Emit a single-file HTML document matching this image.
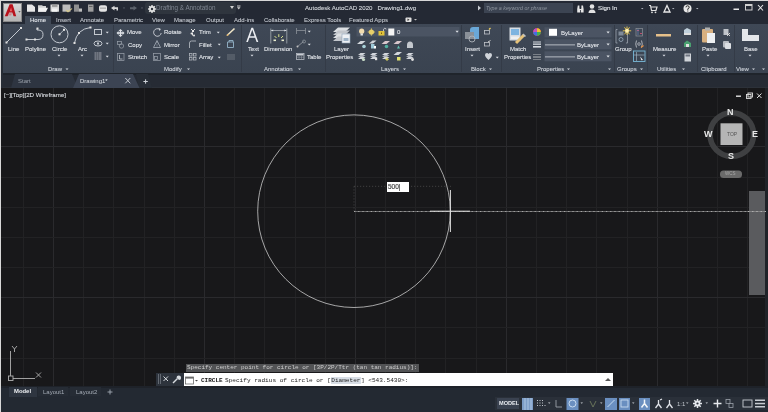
<!DOCTYPE html>
<html><head><meta charset="utf-8">
<style>
*{margin:0;padding:0;box-sizing:border-box}
html,body{width:768px;height:412px;overflow:hidden;background:#1b1b1d}
body{position:relative;font-family:"Liberation Sans",sans-serif;color:#d6dae0}
.a{position:absolute}
.t{position:absolute;white-space:nowrap;line-height:1;will-change:transform}
#title{left:0;top:0;width:768px;height:24px;background:#242934}
#ribbon{left:0;top:24px;width:768px;height:48.7px;background:linear-gradient(#3f4856,#3a4350)}
#ftabs{left:0;top:74px;width:768px;height:14px;background:#262b34}
#vp{left:0;top:88px;width:768px;height:298px;background:#18181a;overflow:hidden}
#status{left:0;top:386px;width:768px;height:26px;background:#232932}
#bt{left:0;top:0;width:768px;height:1px;background:#d8d8d8}
#bl{left:0;top:0;width:1px;height:412px;background:#d8d8d8}
.rt{font-size:6px;color:#e2e5ea;-webkit-text-stroke:0.1px #e2e5ea}
.pl{font-size:6px;color:#cdd2d9;-webkit-text-stroke:0.1px #cdd2d9}
</style></head><body>
<div id="title" class="a"></div>
<div id="ribbon" class="a"></div>
<div id="ftabs" class="a"></div>
<div id="vp" class="a"></div>
<div id="status" class="a"></div>
<!-- TITLE BAR -->
<div class="a" style="left:3px;top:3px;width:19px;height:19px;background:linear-gradient(#d8d8d8,#b4b4b4);border:0.5px solid #8a8a8a"></div>
<svg class="a" style="left:3px;top:3px" width="19" height="19" viewBox="0 0 19 19">
<path d="M1.8 13.2 L6.6 1.2 L9.6 1.2 L13.2 13.2 L10.6 13.2 L9.3 9.6 L6.2 9.6 L4.6 13.2Z" fill="#b8121c"/>
<path d="M6.8 8.2 L8.1 4.2 L9 8.2Z" fill="#f0686a"/>
<path d="M4.8 12.5 L6.4 10.3 L9.2 10.3 L8 12.5Z" fill="#d4606a" opacity="0.6"/>
<path d="M15.3 8.2 h2.4 l-1.2 1.3z" fill="#444"/>
</svg>
<svg class="a" style="left:24px;top:2px" width="220" height="13" viewBox="0 0 220 13"><g transform="translate(0 0.9) scale(1 0.8)">
<!-- new -->
<path d="M3 2 H8 L11 5 V11 H3Z" fill="#e6e6e6"/>
<!-- open -->
<path d="M14 3 H18 L19 4 H22 V11 H14Z" fill="#d2d2d2"/><path d="M15 6 H24 L22 11 H14Z" fill="#f0f0f0"/>
<!-- save -->
<rect x="26.5" y="2" width="8.5" height="9" fill="#d9d9d9"/><rect x="28" y="2" width="5.5" height="3" fill="#9a9a9a"/><rect x="28" y="7" width="5.5" height="4" fill="#f2f2f2"/>
<!-- save as -->
<rect x="38.5" y="2" width="8" height="9" fill="#bdbdbd"/><path d="M42 9 l2 2 l4 -4" stroke="#d6c88a" stroke-width="1.2" fill="none"/>
<!-- web -->
<rect x="50" y="2" width="5" height="9" fill="#8f8f8f"/><rect x="55" y="7" width="3" height="4" fill="#bdbdbd"/>
<!-- plot -->
<rect x="64" y="2" width="5.5" height="9" fill="#9e9e9e"/><rect x="65" y="4" width="3.5" height="1" fill="#555"/>
<!-- print -->
<rect x="75" y="3" width="8" height="8" rx="2" fill="#e4e4e4"/><rect x="76" y="6" width="6" height="1" fill="#888"/>
<!-- undo -->
<path d="M87 6.5 L90.5 3.5 V5.5 H94 V9.5 H92.5 V7.5 H90.5 V9.5Z" fill="#d8d8d8"/>
<path d="M99 6 h2 l-1 1z" fill="#9aa0a8"/>
<!-- redo -->
<path d="M113 6.5 L109.5 3.5 V5.5 H106 V8 H109.5 V9.5Z" fill="#5d636c"/>
<path d="M117 6 h2 l-1 1z" fill="#9aa0a8"/></g>
</svg>
<div class="a" style="left:145px;top:2px;width:91px;height:12px;background:#2f353e;border-radius:3px"></div>
<svg class="a" style="left:146.5px;top:3.5px" width="10" height="10" viewBox="0 0 10 10">
<g stroke="#e4e4e4" stroke-width="1.4"><line x1="5" y1="1" x2="5" y2="9"/><line x1="1" y1="5" x2="9" y2="5"/><line x1="2.2" y1="2.2" x2="7.8" y2="7.8"/><line x1="7.8" y1="2.2" x2="2.2" y2="7.8"/></g>
<circle cx="5" cy="5" r="2.9" fill="#e4e4e4"/><circle cx="5" cy="5" r="1.2" fill="#2f353e"/>
</svg>
<div class="t" style="left:156px;top:5px;font-size:6.3px;color:#7f8691">Drafting &amp; Annotation</div>
<svg class="a" style="left:229px;top:5px" width="14" height="6" viewBox="0 0 14 6"><path d="M1 1h4l-2 3z" fill="#d0d0d0"/><rect x="8" y="0.5" width="3.5" height="1" fill="#d0d0d0"/><path d="M8 2.2h3.5l-1.75 2.3z" fill="#d0d0d0"/></svg>
<div class="t" style="left:305px;top:5.3px;font-size:6.1px;color:#d4d8dd;-webkit-text-stroke:0.1px #d4d8dd">Autodesk AutoCAD 2020&nbsp;&nbsp; Drawing1.dwg</div>
<svg class="a" style="left:477px;top:5px" width="5" height="6"><path d="M1 0.5 l3 2.5 l-3 2.5z" fill="#c8ccd2"/></svg>
<div class="a" style="left:484px;top:3px;width:89px;height:10px;background:#3c4452"></div>
<div class="t" style="left:486px;top:5.5px;font-size:5.3px;color:#8e959f;font-style:italic">Type a keyword or phrase</div>
<svg class="a" style="left:576px;top:3px" width="50" height="11" viewBox="0 0 50 11">
<path d="M1.8 2.5 h1.6 v3 l0.6 0.5 h0.8 l0.6 -0.5 v-3 h1.6 l0.6 3.5 v3.5 h-2.8 v-2.5 h-0.8 v2.5 h-2.8 v-3.5z" fill="#e6e6e6"/>
<circle cx="16" cy="3.5" r="2.3" fill="#e2e2e2"/><path d="M12.5 10 Q12.5 6.5 16 6.5 Q19.5 6.5 19.5 10Z" fill="#e2e2e2"/>
</svg>
<div class="t" style="left:598px;top:5px;font-size:6.2px;color:#dde0e4;-webkit-text-stroke:0.15px #dde0e4">Sign In</div>
<svg class="a" style="left:640px;top:3px" width="62" height="11" viewBox="0 0 62 11">
<path d="M1 5h2.5l-1.25 1.3z" fill="#b9bec6"/>
<path d="M9 2.5 h1.5 l1 5 h4.5 l1-3.5 h-6" stroke="#e0e0e0" stroke-width="1.2" fill="none"/><circle cx="12" cy="9.3" r="0.9" fill="#e0e0e0"/><circle cx="15.5" cy="9.3" r="0.9" fill="#e0e0e0"/>
<path d="M24 9 L27 2.5 L30 9Z" stroke="#e6e6e6" stroke-width="1.3" fill="none"/>
<path d="M32 5h2.5l-1.25 1.3z" fill="#b9bec6"/>
<circle cx="47.5" cy="5.5" r="4" fill="#e8e8e8"/><path d="M46 4.3 Q46 2.8 47.6 2.8 Q49.2 2.8 49.2 4.3 Q49.2 5.3 47.8 5.8 V6.8" stroke="#222" stroke-width="1" fill="none"/><rect x="47.3" y="7.5" width="1" height="1" fill="#222"/>
<path d="M56 5h2.5l-1.25 1.3z" fill="#b9bec6"/>
</svg>
<svg class="a" style="left:730px;top:3px" width="36" height="10" viewBox="0 0 36 10">
<rect x="3.5" y="5.5" width="5.5" height="1.5" fill="#e8e8e8"/>
<rect x="15.5" y="1.5" width="6.5" height="5.5" fill="none" stroke="#d0d0d0" stroke-width="1"/><rect x="15.5" y="1.5" width="6.5" height="1.5" fill="#d0d0d0"/>
<path d="M28 2 L33 7.5 M33 2 L28 7.5" stroke="#e8e8e8" stroke-width="1.1"/>
</svg>
<!-- RIBBON TABS -->
<div class="a" style="left:25px;top:16px;width:26px;height:8px;background:#3f4856"></div>
<div class="t rt" style="left:30px;top:16.5px">Home</div>
<div class="t rt" style="left:56px;top:16.5px;color:#bfc4cb;-webkit-text-stroke:0.1px #bfc4cb">Insert</div>
<div class="t rt" style="left:80px;top:16.5px;color:#bfc4cb;-webkit-text-stroke:0.1px #bfc4cb">Annotate</div>
<div class="t rt" style="left:114px;top:16.5px;color:#bfc4cb;-webkit-text-stroke:0.1px #bfc4cb">Parametric</div>
<div class="t rt" style="left:152px;top:16.5px;color:#bfc4cb;-webkit-text-stroke:0.1px #bfc4cb">View</div>
<div class="t rt" style="left:174px;top:16.5px;color:#bfc4cb;-webkit-text-stroke:0.1px #bfc4cb">Manage</div>
<div class="t rt" style="left:206px;top:16.5px;color:#bfc4cb;-webkit-text-stroke:0.1px #bfc4cb">Output</div>
<div class="t rt" style="left:234px;top:16.5px;color:#bfc4cb;-webkit-text-stroke:0.1px #bfc4cb">Add-ins</div>
<div class="t rt" style="left:264px;top:16.5px;color:#bfc4cb;-webkit-text-stroke:0.1px #bfc4cb">Collaborate</div>
<div class="t rt" style="left:304px;top:16.5px;color:#bfc4cb;-webkit-text-stroke:0.1px #bfc4cb">Express Tools</div>
<div class="t rt" style="left:349px;top:16.5px;color:#bfc4cb;-webkit-text-stroke:0.1px #bfc4cb">Featured Apps</div>
<svg class="a" style="left:404px;top:17px" width="14" height="6"><rect x="1.5" y="0.5" width="6" height="4.5" rx="1" fill="#e0e0e0"/><path d="M3.5 1.5 l2 1.25 -2 1.25z" fill="#333"/><path d="M10 2h3l-1.5 1.5z" fill="#c0c0c0"/></svg>
<!-- label strip -->

<!-- separators -->
<div class="a" style="left:113px;top:25px;width:1px;height:47px;background:#343b47"></div>
<div class="a" style="left:241px;top:25px;width:1px;height:47px;background:#343b47"></div>
<div class="a" style="left:325px;top:25px;width:1px;height:47px;background:#343b47"></div>
<div class="a" style="left:461px;top:25px;width:1px;height:47px;background:#343b47"></div>
<div class="a" style="left:501px;top:25px;width:1px;height:47px;background:#343b47"></div>
<div class="a" style="left:614px;top:25px;width:1px;height:47px;background:#343b47"></div>
<div class="a" style="left:647px;top:25px;width:1px;height:47px;background:#343b47"></div>
<div class="a" style="left:697px;top:25px;width:1px;height:47px;background:#343b47"></div>
<div class="a" style="left:734px;top:25px;width:1px;height:47px;background:#343b47"></div>
<!-- panel labels -->
<div class="t pl" style="left:48px;top:65.7px">Draw</div>
<div class="t pl" style="left:164px;top:65.7px">Modify</div>
<div class="t pl" style="left:264px;top:65.7px">Annotation</div>
<div class="t pl" style="left:381px;top:65.7px">Layers</div>
<div class="t pl" style="left:471px;top:65.7px">Block</div>
<div class="t pl" style="left:537px;top:65.7px">Properties</div>
<div class="t pl" style="left:617px;top:65.7px">Groups</div>
<div class="t pl" style="left:657px;top:65.7px">Utilities</div>
<div class="t pl" style="left:701px;top:65.7px">Clipboard</div>
<div class="t pl" style="left:736px;top:65.7px">View</div>
<svg class="a" style="left:0;top:24px" width="768" height="49" viewBox="0 24 768 49">
<g fill="#d8dce2">
<path d="M65.5 68.5h3l-1.5 1.5z"/><path d="M187 68.5h3l-1.5 1.5z"/><path d="M298 68.5h3l-1.5 1.5z"/><path d="M403 68.5h3l-1.5 1.5z"/>
<path d="M489 68.5h3l-1.5 1.5z"/><path d="M567 68.5h3l-1.5 1.5z"/><path d="M608 68.5h3l-1.5 1.5z"/><path d="M640 68.5h3l-1.5 1.5z"/>
<path d="M682 68.5h3l-1.5 1.5z"/><path d="M752 68.5h3l-1.5 1.5z"/><path d="M762 68.5h3l-1.5 1.5z"/>
<!-- small dropdown arrows -->
<path d="M57.5 54.8h3l-1.5 1.8z"/><path d="M80.5 54.8h3l-1.5 1.8z"/><path d="M250.5 54.8h3l-1.5 1.8z"/><path d="M470.5 54.8h3l-1.5 1.8z"/><path d="M662.5 54.8h3l-1.5 1.8z"/><path d="M706.5 54.8h3l-1.5 1.8z"/><path d="M748.5 54.8h3l-1.5 1.8z"/>
<path d="M105.7 31.7h3.1l-1.55 1.8z"/><path d="M105.7 42.7h3.1l-1.55 1.8z"/><path d="M105.7 55.7h3.1l-1.55 1.8z"/>
<path d="M216.7 31.7h3.1l-1.55 1.8z"/><path d="M217.7 43.7h3.1l-1.55 1.8z"/><path d="M217.7 56.7h3.1l-1.55 1.8z"/>
<path d="M307.7 30.7h3.1l-1.55 1.8z"/><path d="M307.7 43.7h3.1l-1.55 1.8z"/><path d="M495.7 56.7h3.1l-1.55 1.8z"/>
</g>
<!-- DRAW: line -->
<line x1="6.5" y1="42.5" x2="21" y2="28" stroke="#c4c9d0" stroke-width="1"/>
<rect x="5.5" y="41.5" width="2" height="2" fill="#e0e0e0"/><rect x="20" y="27" width="2" height="2" fill="#e0e0e0"/>
<!-- polyline -->
<path d="M26 39.5 H38 Q43 39.5 43 34.5 Q43 30 38 30 H37 V28.5" stroke="#c4c9d0" stroke-width="1" fill="none"/>
<rect x="25.5" y="38.5" width="2" height="2" fill="#e0e0e0"/><rect x="36.5" y="27.5" width="2" height="2" fill="#e0e0e0"/><rect x="34" y="38.5" width="2" height="2" fill="#e0e0e0"/>
<!-- circle -->
<circle cx="59.5" cy="34.3" r="8.5" stroke="#c4c9d0" stroke-width="1" fill="none"/>
<line x1="59.5" y1="34.3" x2="64" y2="29.8" stroke="#c4c9d0" stroke-width="0.8"/>
<rect x="58.5" y="33.3" width="2" height="2" fill="#e8e8e8"/><rect x="63" y="28.8" width="2" height="2" fill="#e8e8e8"/>
<!-- arc -->
<path d="M74.5 43 Q77 29 90.5 27.5" stroke="#c4c9d0" stroke-width="1" fill="none"/>
<rect x="73.5" y="42" width="2" height="2" fill="#e0e0e0"/><rect x="89.5" y="26.5" width="2" height="2" fill="#e0e0e0"/><rect x="78" y="32" width="2" height="2" fill="#e0e0e0"/>
<!-- rect / ellipse / hatch -->
<rect x="94.5" y="29.5" width="7" height="5" stroke="#c4c9d0" stroke-width="1" fill="none"/>
<ellipse cx="98" cy="43.5" rx="4" ry="2.5" stroke="#c4c9d0" stroke-width="1" fill="none"/><rect x="97" y="42.5" width="2" height="2" fill="#c4c9d0"/>
<rect x="94.5" y="52" width="7" height="8" fill="#6f7580"/><g stroke="#4e545e" stroke-width="0.6"><line x1="96.5" y1="52" x2="96.5" y2="60"/><line x1="98.5" y1="52" x2="98.5" y2="60"/></g>
<!-- MODIFY -->
<g fill="#e0e3e8">
<!-- move -->
<path d="M120.5 29 l2 2h-1.3v1.3h1.3v-1.3 l2 2 -2 2v-1.3h-1.3v1.3h1.3 l-2 2 -2-2h1.3v-1.3h-1.3v1.3 l-2-2 2-2v1.3h1.3v-1.3h-1.3z"/>
</g>
<!-- copy -->
<rect x="117.5" y="41.5" width="4" height="3" stroke="#9aa1ab" stroke-width="0.7" fill="none"/><circle cx="121.5" cy="46" r="2.2" stroke="#9aa1ab" stroke-width="0.7" fill="none"/>
<!-- stretch -->
<rect x="117.5" y="53.5" width="6.5" height="7" stroke="#9aa1ab" stroke-width="0.7" fill="none"/><path d="M119.5 55 v4 h3" stroke="#c0c5cc" stroke-width="0.8" fill="none"/>
<!-- rotate -->
<path d="M159.8 29.5 A3.8 3.8 0 1 0 161.2 33" stroke="#d0d4da" stroke-width="0.9" fill="none"/><path d="M158.3 27.8 l2.6 1.2 -1.3 2z" fill="#d0d4da"/>
<!-- mirror -->
<path d="M157 40.5 L153.5 47.5 H160.5Z" stroke="#a6adb7" stroke-width="0.8" fill="none"/><line x1="157" y1="42" x2="157" y2="47" stroke="#a6adb7" stroke-width="0.7" stroke-dasharray="1 0.7"/>
<!-- scale -->
<rect x="153.5" y="53.5" width="7" height="7" stroke="#9aa1ab" stroke-width="0.7" fill="none"/><rect x="154.5" y="56.5" width="3" height="3" stroke="#9aa1ab" stroke-width="0.7" fill="none"/>
<!-- trim -->
<path d="M191 29 l3 3 M195 29 l-3 3 M192.5 32.5 v3" stroke="#e6e6e6" stroke-width="1" fill="none"/><circle cx="191.5" cy="33.5" r="1" fill="#e6e6e6"/><circle cx="194" cy="35.5" r="1" fill="#e6e6e6"/>
<!-- fillet -->
<path d="M189.5 48 V43 Q189.5 41 191.5 41 H196" stroke="#aeb3bb" stroke-width="0.9" fill="none"/>
<!-- array -->
<g stroke="#aeb3bb" stroke-width="0.8" fill="none"><rect x="189.5" y="53.5" width="2.5" height="2.5"/><rect x="193.5" y="53.5" width="2.5" height="2.5"/><rect x="189.5" y="57.5" width="2.5" height="2.5"/><rect x="193.5" y="57.5" width="2.5" height="2.5"/></g>
<!-- col: brush, box, lines -->
<path d="M227 35.5 L234.5 28.5" stroke="#f0e6c8" stroke-width="1.6"/><path d="M226 36 l2-2 1 1z" fill="#e0a040"/>
<path d="M227.5 42 h6 v5.5 h-6z" stroke="#94b3c8" stroke-width="0.9" fill="none"/><path d="M229 42 v-1.5 h4 v1.5" stroke="#94b3c8" stroke-width="0.9" fill="none"/>
<g stroke="#7a8088" stroke-width="0.8"><line x1="227" y1="55" x2="235" y2="55"/><line x1="227" y1="57" x2="235" y2="57"/><line x1="227" y1="59" x2="235" y2="59"/></g>
<!-- ANNOTATION: Text A -->
<path d="M246.2 42 L251.4 27.8 H253.1 L258.3 42 H256.6 L255.1 37.8 H249.4 L247.9 42Z M250 36.2 H254.5 L252.25 29.8Z" fill="#eceef2"/>
<!-- dimension -->
<g stroke="#aab0b8" stroke-width="0.8" fill="none"><line x1="270.8" y1="28.5" x2="270.8" y2="43.5"/><line x1="286.8" y1="28.5" x2="286.8" y2="43.5"/><line x1="271" y1="30.5" x2="286.5" y2="30.5"/></g>
<g fill="#dfe3e8"><path d="M271 30.5 l2.2 -1.1 v2.2z"/><path d="M286.5 30.5 l-2.2 -1.1 v2.2z"/></g>
<g stroke="#d8e08a" stroke-width="1"><line x1="278.8" y1="34.2" x2="278.8" y2="37"/><line x1="274.5" y1="36" x2="276.5" y2="38"/><line x1="283" y1="36" x2="281" y2="38"/></g>
<g fill="#e8ecd0"><rect x="273.5" y="39.5" width="2.5" height="1.6"/><rect x="281.5" y="39.5" width="2.5" height="1.6"/></g>
<!-- linear dim small -->
<g stroke="#8d939b" stroke-width="0.8" fill="none"><line x1="296.5" y1="28" x2="296.5" y2="34"/><line x1="305.5" y1="28" x2="305.5" y2="34"/><line x1="296.5" y1="30.5" x2="305.5" y2="30.5"/></g>
<!-- leader -->
<path d="M297 47 L303.5 41.5" stroke="#9aa0a8" stroke-width="0.8"/><circle cx="304" cy="41.5" r="1.5" stroke="#9aa0a8" stroke-width="0.7" fill="none"/><circle cx="297.5" cy="46.5" r="1" fill="#c0c0c0"/>
<!-- table -->
<rect x="296.5" y="53.5" width="7.5" height="6" stroke="#b8bec6" stroke-width="0.8" fill="none"/><rect x="297" y="54" width="6.5" height="1.5" fill="#c8ccd2"/><g stroke="#9aa0a8" stroke-width="0.5"><line x1="296.5" y1="57.2" x2="304" y2="57.2"/><line x1="299" y1="55.5" x2="299" y2="59.5"/><line x1="301.5" y1="55.5" x2="301.5" y2="59.5"/></g>
<!-- LAYER PROPERTIES icon -->
<g fill="#dcdfe3"><path d="M333 32 L338 27.5 H350 L345 32Z"/><path d="M333 35 L338 30.5 H350 L345 35Z" fill="#c2c6cc"/><path d="M333 38 L338 33.5 H350 L345 38Z"/><path d="M333 41 L338 36.5 H350 L345 41Z" fill="#c2c6cc"/></g>
<rect x="342" y="34" width="8" height="9" fill="#eef1f5" stroke="#8fa3b8" stroke-width="0.6"/><rect x="343.5" y="38" width="5" height="3" fill="#9fb4c8"/>
<!-- layer dropdown -->
<rect x="356.5" y="27" width="103" height="9.5" fill="#4b5463"/>
<circle cx="361.7" cy="31.2" r="2.6" fill="#f2dcae"/><rect x="360.5" y="33.5" width="2.4" height="2" fill="#e8e8e8"/>
<circle cx="371.4" cy="32" r="2.6" fill="#e8cf6a"/><g stroke="#e8cf6a" stroke-width="0.8"><line x1="371.4" y1="28.3" x2="371.4" y2="35.7"/><line x1="367.7" y1="32" x2="375.1" y2="32"/></g>
<rect x="378.5" y="31" width="6" height="4.5" fill="#e0c23c"/><path d="M383.5 31 V29.3 Q384.5 27.5 386.3 29" stroke="#e0e0e0" stroke-width="0.8" fill="none"/><rect x="381" y="32.5" width="1" height="1.5" fill="#806010"/>
<rect x="388.3" y="28.5" width="6" height="7" fill="#f4f4f4"/>
<path d="M455.5 30.8h3.2l-1.6 1.9z" fill="#e0e3e8"/>
<!-- layer small icons row2/row3 -->
<g fill="#d2d6dc">
<path d="M357 44 l3.5-3 h5 l-3.5 3z"/><path d="M369 43.5 l3.5-3 h4 l-3.5 3z"/><path d="M381.5 44 l3.5-3 h5 l-3.5 3z" fill="#d8c6cc"/><path d="M393.5 44 l3.5-3 h5 l-3.5 3z" fill="#d8c6cc"/>
<path d="M407 45 q0-3.5 3-3.5 q3 0 3 3.5 v3 h-6z" fill="#c4c8ce"/>
<path d="M358 55 l2.5-2 h5 l-2.5 2z"/><path d="M358 57 l2.5-2 h5 l-2.5 2z" fill="#aeb3ba"/><path d="M358 59 l2.5-2 h5 l-2.5 2z"/>
<path d="M370 55 l2.5-2 h5 l-2.5 2z"/><path d="M370 57 l2.5-2 h5 l-2.5 2z" fill="#aeb3ba"/><path d="M370 59 l2.5-2 h5 l-2.5 2z"/>
<path d="M382 55 l2.5-2 h5 l-2.5 2z"/><path d="M382 57 l2.5-2 h5 l-2.5 2z" fill="#aeb3ba"/><path d="M382 59 l2.5-2 h5 l-2.5 2z"/>
<path d="M393.5 55 l3.5-3 h5 l-3.5 3z"/>
<path d="M406 55 l2.5-2 h5 l-2.5 2z"/><path d="M406 57 l2.5-2 h5 l-2.5 2z" fill="#aeb3ba"/><path d="M406 59 l2.5-2 h5 l-2.5 2z"/>
</g>
<g>
<circle cx="364" cy="46.5" r="1.8" fill="#a8d0d8"/><rect x="371" y="44" width="3.5" height="4.5" fill="#9cc8d8"/><rect x="374" y="46" width="2" height="2.5" fill="#ffffff"/>
<circle cx="386.5" cy="46.5" r="1.8" fill="#50b0a0"/><path d="M397 48.5 l1.5-3 1.5 3z" fill="#60c0b0"/>
<circle cx="363.5" cy="59.5" r="1.6" fill="#c8dcc8"/><rect x="375" y="58" width="2.2" height="2.2" fill="#e0e0e0"/><path d="M387 57.5 v3.5 M385.3 59.3 h3.5" stroke="#e8e060" stroke-width="0.9"/>
<rect x="397" y="57" width="3.5" height="3.5" fill="#e0e070"/><circle cx="412.5" cy="59.5" r="1.4" fill="#e0e0e0"/>
</g>
<!-- INSERT -->
<path d="M470 30 Q470 27 473 27 H479 V39 H470Z" fill="#6aa8d8"/><rect x="465" y="32" width="9" height="7" fill="#8a9098"/><circle cx="472" cy="39" r="3" fill="none" stroke="#b0b4ba" stroke-width="0.9"/>
<rect x="484.5" y="30.5" width="5" height="3.5" fill="none" stroke="#c0c4ca" stroke-width="0.8"/><path d="M489 29.5 l1.5-1.5" stroke="#f0d060" stroke-width="1.2"/>
<rect x="484.5" y="42.5" width="5" height="3.5" fill="none" stroke="#c0c4ca" stroke-width="0.8"/><path d="M488 42 l2.5-1.5" stroke="#d0d0d0" stroke-width="1"/>
<path d="M485 55 Q485 53 487 53 Q488 53 488.5 54 Q489 53 490 53 Q492 53 492 55 Q492 57 488.5 60 Q485 57 485 55Z" fill="#d0d4da"/>
<!-- MATCH PROPERTIES -->
<rect x="509.5" y="27.5" width="11" height="13" fill="#d8dde3"/><rect x="511" y="29" width="8" height="6" fill="#7eb4e0"/><rect x="511" y="36.5" width="8" height="2.5" fill="#f0f0f0"/>
<path d="M516 43 L524 35" stroke="#e6c27a" stroke-width="3"/><path d="M523 34 l2.5 2.5" stroke="#c0c0c0" stroke-width="1.5"/>
<!-- color wheel & line icons -->
<circle cx="537" cy="32" r="3.8" fill="#e65050"/><path d="M537 32 L537 28.2 A3.8 3.8 0 0 1 540.8 32Z" fill="#f0c030"/><path d="M537 32 L540.8 32 A3.8 3.8 0 0 1 537 35.8Z" fill="#40b050"/><path d="M537 32 L537 35.8 A3.8 3.8 0 0 1 533.2 32Z" fill="#4070e0"/><path d="M537 32 L533.2 32 A3.8 3.8 0 0 1 537 28.2Z" fill="#c050c0"/>
<g fill="#d8dce2"><rect x="533" y="41.5" width="8" height="1"/><rect x="533" y="43.5" width="8" height="1.3"/><rect x="533" y="46" width="8" height="1.6"/></g>
<g fill="#7a8088"><rect x="533" y="54" width="8" height="1"/><rect x="533" y="56" width="8" height="2"/><rect x="533" y="59" width="8" height="1"/></g>
<!-- property dropdowns -->
<rect x="544.5" y="27.3" width="67" height="10" fill="#4b5463"/>
<rect x="544.5" y="39.3" width="67" height="10" fill="#4b5463"/>
<rect x="544.5" y="51.3" width="67" height="10" fill="#4b5463"/>
<rect x="549" y="28.8" width="8" height="7" fill="#ffffff"/>
<rect x="545" y="44.5" width="30" height="0.8" fill="#d0d4da"/>
<rect x="545" y="56.5" width="30" height="0.8" fill="#d0d4da"/>
<g fill="#e0e3e8"><path d="M606.5 31.6h3.2l-1.6 1.9z"/><path d="M606.5 43.6h3.2l-1.6 1.9z"/><path d="M606.5 55.6h3.2l-1.6 1.9z"/></g>
<!-- GROUP -->
<path d="M617.5 29.5 h-1.5 v13.5 h1.5 M626 29.5 h1.5 v13.5 h-1.5" stroke="#9aa1ab" stroke-width="0.8" fill="none"/>
<rect x="618.5" y="31.5" width="5" height="4" fill="#7f8a98"/><circle cx="621" cy="39.5" r="2" fill="none" stroke="#8fa0b0" stroke-width="0.9"/>
<g stroke="#f4d050" stroke-width="0.9"><line x1="624.5" y1="27.3" x2="629.5" y2="34.3"/><line x1="629.5" y1="27.3" x2="624.5" y2="34.3"/><line x1="627" y1="26.5" x2="627" y2="35"/><line x1="622.8" y1="30.8" x2="631.2" y2="30.8"/></g><circle cx="627" cy="30.8" r="2" fill="#fff0b0"/>
<rect x="636" y="28.5" width="6.5" height="7.5" fill="none" stroke="#8d939b" stroke-width="0.7"/><path d="M637 30.5 h2 M640 33.5 h2" stroke="#d05070" stroke-width="0.9"/><path d="M638 29 v6" stroke="#7090d0" stroke-width="0.6"/>
<path d="M636.5 40.5 Q635 44 636.5 47.5 M641.5 40.5 Q643 44 641.5 47.5" stroke="#c8ccd2" stroke-width="0.8" fill="none"/><circle cx="639" cy="44" r="1.3" fill="none" stroke="#c8ccd2" stroke-width="0.7"/><path d="M641 47.5 l2.5-2" stroke="#e89040" stroke-width="1.3"/>
<rect x="633.5" y="51" width="11.5" height="10.5" fill="none" stroke="#78b8d8" stroke-width="0.9"/><g stroke="#a8c0d0" stroke-width="0.6"><line x1="636.5" y1="52" x2="636.5" y2="61"/><line x1="634" y1="55" x2="644.5" y2="55"/></g><path d="M640 56.5 l3 3.5 l-1.5 0.3z" fill="#ffffff"/>
<!-- MEASURE -->
<rect x="656" y="34" width="15" height="2.5" fill="#e6c08a"/>
<path d="M684 30 l3-2 4 2 v3 h-7z" fill="#c0d0dc"/><rect x="684" y="33" width="7" height="2" fill="#e0e0e0"/>
<path d="M684 43 l3-2.5 4 2.5 v4 h-7z" fill="#4aa070"/><rect x="686" y="44" width="3" height="3" fill="#e0e0e0"/>
<rect x="684.5" y="53.5" width="6.5" height="8" fill="#cfd3d8"/><rect x="685.5" y="54.5" width="4.5" height="2" fill="#6f7580"/>
<!-- PASTE -->
<rect x="702" y="29" width="11" height="13.5" rx="1" fill="#d8b080"/><rect x="705" y="27.5" width="5" height="3" fill="#b0b0b0"/>
<rect x="707" y="33" width="8" height="10" fill="#eef0f2"/>
<rect x="723.5" y="29" width="5" height="6" fill="#c0c4ca"/><path d="M727 33 l3 3 M730 33 l-3 3" stroke="#e0e0e0" stroke-width="0.9"/>
<rect x="723" y="41" width="6" height="6.5" rx="1" fill="#b8bcc2"/><rect x="725" y="43" width="6" height="6" rx="1" fill="#dcdfe3"/>
<!-- BASE -->
<path d="M742 29 H748 V35 H759 V41 H742Z" fill="#e4e6ea"/>
</svg>
<!-- ribbon button labels -->
<div class="t rt" style="left:8px;top:46.4px">Line</div>
<div class="t rt" style="left:25px;top:46.4px">Polyline</div>
<div class="t rt" style="left:52px;top:46.4px">Circle</div>
<div class="t rt" style="left:78px;top:46.4px">Arc</div>
<div class="t rt" style="left:127px;top:29px">Move</div>
<div class="t rt" style="left:128px;top:42px">Copy</div>
<div class="t rt" style="left:128px;top:54.3px">Stretch</div>
<div class="t rt" style="left:164px;top:29px">Rotate</div>
<div class="t rt" style="left:164px;top:42px">Mirror</div>
<div class="t rt" style="left:164px;top:54.3px">Scale</div>
<div class="t rt" style="left:199px;top:29px">Trim</div>
<div class="t rt" style="left:199px;top:42px">Fillet</div>
<div class="t rt" style="left:199px;top:54.3px">Array</div>
<div class="t rt" style="left:248px;top:46.4px">Text</div>
<div class="t rt" style="left:264px;top:46.4px">Dimension</div>
<div class="t rt" style="left:307px;top:54.3px">Table</div>
<div class="t rt" style="left:334px;top:46.4px">Layer</div>
<div class="t rt" style="left:326px;top:54.3px">Properties</div>
<div class="t rt" style="left:397px;top:28.5px">0</div>
<div class="t rt" style="left:465px;top:46.4px">Insert</div>
<div class="t rt" style="left:510px;top:46.4px">Match</div>
<div class="t rt" style="left:504px;top:54.3px">Properties</div>
<div class="t rt" style="left:561px;top:29.5px">ByLayer</div>
<div class="t rt" style="left:577px;top:41.5px">ByLayer</div>
<div class="t rt" style="left:577px;top:53.5px">ByLayer</div>
<div class="t rt" style="left:615px;top:46.4px">Group</div>
<div class="t rt" style="left:653px;top:46.4px">Measure</div>
<div class="t rt" style="left:702px;top:46.4px">Paste</div>
<div class="t rt" style="left:744px;top:46.4px">Base</div>
<!-- FILE TABS -->
<div class="a" style="left:0;top:87px;width:768px;height:1.2px;background:#2c3139" id="y86line"></div>
<div class="a" style="left:0;top:72.7px;width:768px;height:2.1px;background:#1f242b"></div>
<svg class="a" style="left:0;top:74px" width="160" height="14" viewBox="0 74 160 14">
<path d="M11 88 L15 74 H72 L78 88Z" fill="#2e3541"/>
<path d="M139 88 L152 88 L148 74 H136Z" fill="#282e37"/>
<path d="M73 88 L79 74 H133 L139.5 88Z" fill="#3c4453"/>
<path d="M125.3 78 l5 5.3 M130.3 78 l-5 5.3" stroke="#c4c9d0" stroke-width="1"/>
<path d="M145.6 79.3 v4.4 M143.4 81.5 h4.4" stroke="#d0d4da" stroke-width="1"/>
</svg>
<div class="t" style="left:18px;top:78px;font-size:6px;color:#9aa1ab">Start</div>
<div class="t" style="left:80px;top:78px;font-size:6px;color:#dde1e6">Drawing1*</div>
<!-- VIEWPORT -->
<svg class="a" style="left:0;top:88px" width="768" height="298" viewBox="0 88 768 298">
<g id="grid" stroke-width="1">
<line x1="23.5" y1="88" x2="23.5" y2="386" stroke="#222224"/>
<line x1="53.5" y1="88" x2="53.5" y2="386" stroke="#2a2a2d"/>
<line x1="83.5" y1="88" x2="83.5" y2="386" stroke="#222224"/>
<line x1="113.5" y1="88" x2="113.5" y2="386" stroke="#222224"/>
<line x1="144.5" y1="88" x2="144.5" y2="386" stroke="#222224"/>
<line x1="174.5" y1="88" x2="174.5" y2="386" stroke="#222224"/>
<line x1="204.5" y1="88" x2="204.5" y2="386" stroke="#2a2a2d"/>
<line x1="234.5" y1="88" x2="234.5" y2="386" stroke="#222224"/>
<line x1="264.5" y1="88" x2="264.5" y2="386" stroke="#222224"/>
<line x1="295.5" y1="88" x2="295.5" y2="386" stroke="#222224"/>
<line x1="325.5" y1="88" x2="325.5" y2="386" stroke="#222224"/>
<line x1="355.5" y1="88" x2="355.5" y2="386" stroke="#2a2a2d"/>
<line x1="385.5" y1="88" x2="385.5" y2="386" stroke="#222224"/>
<line x1="415.5" y1="88" x2="415.5" y2="386" stroke="#222224"/>
<line x1="445.5" y1="88" x2="445.5" y2="386" stroke="#222224"/>
<line x1="476.5" y1="88" x2="476.5" y2="386" stroke="#222224"/>
<line x1="506.5" y1="88" x2="506.5" y2="386" stroke="#2a2a2d"/>
<line x1="536.5" y1="88" x2="536.5" y2="386" stroke="#222224"/>
<line x1="566.5" y1="88" x2="566.5" y2="386" stroke="#222224"/>
<line x1="596.5" y1="88" x2="596.5" y2="386" stroke="#222224"/>
<line x1="627.5" y1="88" x2="627.5" y2="386" stroke="#222224"/>
<line x1="657.5" y1="88" x2="657.5" y2="386" stroke="#2a2a2d"/>
<line x1="687.5" y1="88" x2="687.5" y2="386" stroke="#222224"/>
<line x1="717.5" y1="88" x2="717.5" y2="386" stroke="#222224"/>
<line x1="747.5" y1="88" x2="747.5" y2="386" stroke="#222224"/>
<line x1="0" y1="116.5" x2="768" y2="116.5" stroke="#222224"/>
<line x1="0" y1="146.5" x2="768" y2="146.5" stroke="#2a2a2d"/>
<line x1="0" y1="177.5" x2="768" y2="177.5" stroke="#222224"/>
<line x1="0" y1="207.5" x2="768" y2="207.5" stroke="#222224"/>
<line x1="0" y1="237.5" x2="768" y2="237.5" stroke="#222224"/>
<line x1="0" y1="267.5" x2="768" y2="267.5" stroke="#222224"/>
<line x1="0" y1="297.5" x2="768" y2="297.5" stroke="#2a2a2d"/>
<line x1="0" y1="327.5" x2="768" y2="327.5" stroke="#222224"/>
<line x1="0" y1="358.5" x2="768" y2="358.5" stroke="#222224"/>
</g>
<!-- circle -->
<circle cx="354" cy="211.2" r="96.3" fill="none" stroke="#d6d6d6" stroke-width="0.75"/>
<!-- dim lines -->
<line x1="354" y1="186.3" x2="451" y2="186.3" stroke="#5a5a5a" stroke-width="0.6" stroke-dasharray="1.2 1.8"/>
<line x1="354" y1="186.3" x2="354" y2="211" stroke="#5a5a5a" stroke-width="0.6" stroke-dasharray="1.2 1.8"/>
<line x1="354" y1="211.5" x2="766" y2="211.5" stroke="#7a7a7a" stroke-width="0.8"/><line x1="354" y1="211.5" x2="766" y2="211.5" stroke="#b0b0b0" stroke-width="0.9" stroke-dasharray="1.2 3"/>
<!-- crosshair -->
<line x1="430" y1="211.2" x2="470" y2="211.2" stroke="#e0e0e0" stroke-width="1"/>
<line x1="450.4" y1="190" x2="450.4" y2="232" stroke="#e0e0e0" stroke-width="1"/>
<!-- UCS -->
<g stroke="#b0b0b0" stroke-width="0.9" fill="none">
<line x1="10.5" y1="351" x2="10.5" y2="376"/><line x1="13" y1="378.5" x2="35" y2="378.5"/>
<rect x="8.5" y="376" width="4.5" height="4.5"/>
<path d="M12 346 l2.5 3 l2.5 -3 M14.5 349 v3"/><path d="M36 372.5 l5 5 M41 372.5 l-5 5"/>
</g>
</svg>
<div class="a" style="left:386.5px;top:182px;width:22.5px;height:10px;background:#ffffff"></div>
<div class="t" style="left:387.5px;top:183.8px;font-size:6.5px;color:#3a3a3a;-webkit-text-stroke:0.15px #3a3a3a">500</div>
<div class="a" style="left:398.5px;top:183.5px;width:0.7px;height:7px;background:#777"></div>
<div class="t" style="left:4px;top:92px;font-size:6.2px;color:#d8dce0;-webkit-text-stroke:0.1px #d8dce0">[−][Top][2D Wireframe]</div>
<!-- viewport controls -->
<svg class="a" style="left:730px;top:92px" width="36" height="10" viewBox="0 0 36 10">
<rect x="6" y="3.5" width="5" height="1.4" fill="#e0e0e0"/>
<rect x="16.5" y="2.5" width="4.5" height="4" fill="none" stroke="#e0e0e0" stroke-width="0.9"/><rect x="18" y="1" width="4.5" height="4" fill="none" stroke="#e0e0e0" stroke-width="0.9"/>
<path d="M27 1.5 l4.5 4.5 M31.5 1.5 l-4.5 4.5" stroke="#e0e0e0" stroke-width="1"/>
</svg>
<!-- viewcube -->
<svg class="a" style="left:700px;top:100px" width="64" height="84" viewBox="700 100 64 84">
<circle cx="731.8" cy="134.5" r="21.8" fill="none" stroke="#3f4042" stroke-width="5.6"/>
<rect x="720.5" y="123.3" width="22" height="21.7" fill="#b5b5b5"/>
<rect x="720" y="170.5" width="22" height="7.5" rx="3.5" fill="#6a6a6a"/>
</svg>
<div class="t" style="left:727px;top:108px;font-size:9px;font-weight:bold;color:#e8e8e8">N</div>
<div class="t" style="left:727.5px;top:151.5px;font-size:9px;font-weight:bold;color:#e8e8e8">S</div>
<div class="t" style="left:703.5px;top:130px;font-size:9px;font-weight:bold;color:#e8e8e8">W</div>
<div class="t" style="left:752px;top:130px;font-size:9px;font-weight:bold;color:#e8e8e8">E</div>
<div class="t" style="left:726.5px;top:131.5px;font-size:5px;color:#555">TOP</div>
<div class="t" style="left:724.5px;top:172px;font-size:4.5px;color:#a8a8a8">WCS</div>
<!-- navbar -->
<div class="a" style="left:765px;top:88px;width:3px;height:298px;background:#202328"></div>
<div class="a" style="left:749px;top:191px;width:16px;height:104px;background:#5a5b5e"></div>
<svg class="a" style="left:748px;top:209px" width="20" height="5" viewBox="748 209 20 5"><line x1="748" y1="211.5" x2="766" y2="211.5" stroke="#8a8a8a" stroke-width="0.8"/><line x1="748" y1="211.5" x2="766" y2="211.5" stroke="#c0c0c0" stroke-width="0.9" stroke-dasharray="1.2 3"/></svg>
<!-- COMMAND LINE -->
<div class="a" style="left:185.5px;top:363.5px;width:233.5px;height:8.3px;background:#525355"></div>
<div class="t" style="left:187px;top:365.2px;font-family:'Liberation Mono',monospace;font-size:6px;color:#cfcfcf">Specify center point for circle or [3P/2P/Ttr (tan tan radius)]:</div>
<div class="a" style="left:156px;top:372.5px;width:27.5px;height:13.5px;background:#2d333c"></div>
<svg class="a" style="left:156px;top:372px" width="28" height="14" viewBox="0 0 28 14">
<g fill="#9aa0a8"><rect x="2" y="2.5" width="1" height="1"/><rect x="2" y="4.5" width="1" height="1"/><rect x="2" y="6.5" width="1" height="1"/><rect x="2" y="8.5" width="1" height="1"/><rect x="2" y="10.5" width="1" height="1"/><rect x="4" y="2.5" width="1" height="1"/><rect x="4" y="4.5" width="1" height="1"/><rect x="4" y="6.5" width="1" height="1"/><rect x="4" y="8.5" width="1" height="1"/><rect x="4" y="10.5" width="1" height="1"/></g>
<path d="M7.5 4.5 l4.5 4.5 M12 4.5 l-4.5 4.5" stroke="#d8dce0" stroke-width="1"/>
<path d="M17 11 L21.5 6.5" stroke="#d8dce0" stroke-width="1.4"/><path d="M20.5 5.5 A2.3 2.3 0 1 1 23 8 L22 7 Z" fill="#d8dce0"/>
</svg>
<div class="a" style="left:183.5px;top:373px;width:429.5px;height:13px;background:#ffffff"></div>
<svg class="a" style="left:185px;top:375.5px" width="14" height="10" viewBox="0 0 14 10">
<rect x="0.5" y="1" width="8" height="7" fill="none" stroke="#6a6a6a" stroke-width="0.8"/><rect x="0.5" y="1" width="8" height="1.6" fill="#6a6a6a"/>
<path d="M10 4h3l-1.5 1.5z" fill="#444"/>
</svg>
<div class="t" style="left:201px;top:377.5px;font-family:'Liberation Mono',monospace;font-size:6px;color:#111;font-weight:bold">CIRCLE</div>
<div class="t" style="left:225.3px;top:377.5px;font-family:'Liberation Mono',monospace;font-size:6.08px;color:#222">Specify radius of circle or [<span style="background:#d8dee6;padding:0 0.5px">Diameter</span>] &lt;543.5430&gt;:</div>
<svg class="a" style="left:604px;top:377px" width="8" height="5"><path d="M1 4 L4 1 L7 4Z" fill="#555"/></svg>
<!-- LAYOUT TABS -->
<div class="a" style="left:0;top:386px;width:768px;height:1.5px;background:#1e2229"></div>
<div class="a" style="left:8.5px;top:387px;width:28px;height:9.5px;background:#2e3540"></div>
<div class="a" style="left:38px;top:386.5px;width:30px;height:9.5px;background:#262c35"></div>
<div class="a" style="left:70px;top:386.5px;width:31px;height:9.5px;background:#262c35"></div>
<div class="t" style="left:14.3px;top:388.7px;font-size:5.9px;font-weight:bold;color:#eef0f3">Model</div>
<div class="t" style="left:43px;top:388.5px;font-size:6px;color:#a4abb5">Layout1</div>
<div class="t" style="left:76px;top:388.5px;font-size:6px;color:#a4abb5">Layout2</div>
<svg class="a" style="left:106px;top:387.5px" width="8" height="8"><path d="M4 1.5v5 M1.5 4h5" stroke="#a4abb5" stroke-width="0.9"/></svg>
<!-- STATUS ICONS -->
<div class="a" style="left:495px;top:396.5px;width:273px;height:13px;background:#2a3039"></div>
<div class="a" style="left:496.5px;top:397.5px;width:22.5px;height:11.5px;background:#3a4250"></div>
<div class="t" style="left:498.5px;top:400.8px;font-size:5.6px;font-weight:bold;color:#e6e9ee">MODEL</div>
<svg class="a" style="left:520px;top:395.8px" width="248" height="15" viewBox="520 395 248 15">
<rect x="522" y="397" width="11" height="12" fill="#7d9dc6"/>
<g stroke="#b9d0ea" stroke-width="0.8"><line x1="525" y1="397" x2="525" y2="409"/><line x1="528" y1="397" x2="528" y2="409"/><line x1="531" y1="397" x2="531" y2="409"/></g>
<g fill="#c0c5cc"><rect x="537" y="399" width="1" height="1"/><rect x="539.5" y="399" width="1" height="1"/><rect x="542" y="399" width="1" height="1"/><rect x="537" y="401.5" width="1" height="1"/><rect x="539.5" y="401.5" width="1" height="1"/><rect x="542" y="401.5" width="1" height="1"/><rect x="537" y="404" width="1" height="1"/><rect x="539.5" y="404" width="1" height="1"/><rect x="542" y="404" width="1" height="1"/><rect x="544.5" y="404" width="1" height="1"/></g>
<g fill="#d0d4da"><path d="M548 401.5h2.5l-1.25 1.3z"/><path d="M580.5 401.5h2.5l-1.25 1.3z"/><path d="M600 401.5h2.5l-1.25 1.3z"/><path d="M632 401.5h2.5l-1.25 1.3z"/><path d="M686 401.5h2.5l-1.25 1.3z"/><path d="M705.5 401.5h2.5l-1.25 1.3z"/></g>
<path d="M556 399 V406 H562" stroke="#9aa0a8" stroke-width="0.9" fill="none"/>
<rect x="566.5" y="397" width="12" height="12" fill="#6a8fc0"/>
<circle cx="572.5" cy="402.5" r="3.5" fill="none" stroke="#c8dcf0" stroke-width="1"/>
<path d="M590 400 l3 6 l3-6" stroke="#6f7a5e" stroke-width="0.9" fill="none"/>
<rect x="605" y="397" width="12" height="12" fill="#6a8fc0"/><path d="M607.5 406 l7-7" stroke="#c8dcf0" stroke-width="1"/>
<rect x="619" y="397" width="11" height="12" fill="#6a8fc0"/><rect x="621" y="399" width="7" height="7" fill="none" stroke="#c8dcf0" stroke-width="0.9"/>
<rect x="639" y="397" width="11" height="12" fill="#6a8fc0"/>
<path d="M644.5 398.5 v4 l-3 4 M644.5 402.5 l3 4" stroke="#f0f4f8" stroke-width="1.5" fill="none"/>
<path d="M658.5 399 v4 l-3 4 M658.5 403 l3 4 M660 399 l2 -1" stroke="#e0e3e8" stroke-width="1.3" fill="none"/>
<path d="M669.5 399 v4 l-3 4 M669.5 403 l3 4" stroke="#e0e3e8" stroke-width="1.3" fill="none"/>
<g stroke="#e6e9ee" stroke-width="1.5"><line x1="697.5" y1="398" x2="697.5" y2="407"/><line x1="693" y1="402.5" x2="702" y2="402.5"/><line x1="694.3" y1="399.3" x2="700.7" y2="405.7"/><line x1="700.7" y1="399.3" x2="694.3" y2="405.7"/></g><circle cx="697.5" cy="402.5" r="2.9" fill="#e6e9ee"/><circle cx="697.5" cy="402.5" r="1.1" fill="#2a3039"/>
<path d="M717.5 398.5 v8 M713.5 402.5 h8" stroke="#e8eaee" stroke-width="1.4"/>
<rect x="726" y="398.5" width="4" height="4" fill="none" stroke="#9aa0a8" stroke-width="0.8"/><rect x="729" y="402.5" width="4" height="4" fill="none" stroke="#9aa0a8" stroke-width="0.8"/>
<rect x="743" y="399" width="9" height="7" fill="none" stroke="#c8ccd2" stroke-width="0.9"/>
<g fill="#c8ccd2"><rect x="755" y="398.5" width="10" height="1.5"/><rect x="755" y="401.8" width="10" height="1.5"/><rect x="755" y="405" width="10" height="1.5"/></g>
</svg>
<div class="t" style="left:677px;top:400.5px;font-size:6px;color:#c0c5cc">1:1</div>
<div class="a" id="leftstrip" style="left:1px;top:16px;width:2px;height:72px;background:#262c35"></div>
<div id="bt" class="a"></div>
<div id="bl" class="a"></div>
</body></html>
